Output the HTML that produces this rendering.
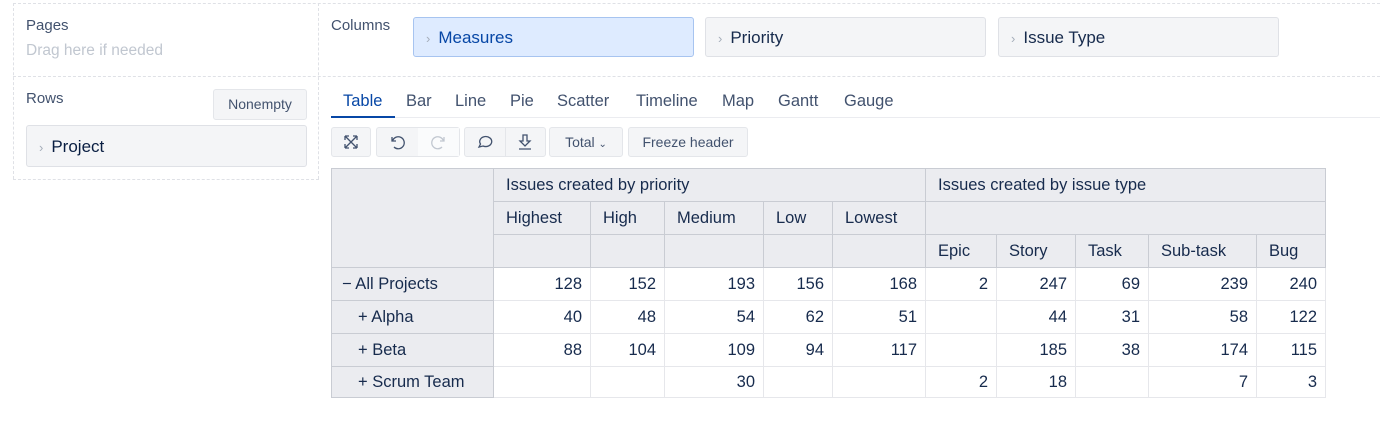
<!DOCTYPE html>
<html><head><style>
*{box-sizing:border-box;margin:0;padding:0}
body{width:1380px;height:438px;background:#fff;font-family:"Liberation Sans",sans-serif;color:#172b4d;position:relative;overflow:hidden}
.a{position:absolute}
.lbl{font-size:15px;color:#42526e}
.pill{position:absolute;height:40px;border:1px solid #dfe1e6;background:#f4f5f7;border-radius:3px;font-size:17px;line-height:40px;padding-left:12px;color:#172b4d}
.pill i{font-style:normal;color:#a5adba;font-size:13px;margin-right:8px}
.btn{position:absolute;top:127px;height:30px;background:#f4f5f7;border:1px solid #e4e6ea;border-radius:3px;font-size:14px;line-height:28px;color:#42526e;text-align:center}
.tab{position:absolute;top:92px;font-size:16.5px;color:#42526e}
table{position:absolute;left:331px;top:168px;border-collapse:collapse;font-size:16.5px;color:#172b4d}
td{border:1px solid #c9ccd3;height:33px;padding:0 8px;white-space:nowrap}
.h{background:#ebecf0;text-align:left;padding-left:12px}
.n{text-align:right;border-color:#e6e7eb}
.r{background:#ebecf0;padding-left:10px}
tr.last td{height:31px;line-height:29px}
</style></head><body>
<div class="a" style="left:13px;top:3px;width:1367px;border-top:1px dashed #dfe1e6"></div>
<div class="a" style="left:13px;top:3px;height:176px;border-left:1px dashed #dfe1e6"></div>
<div class="a" style="left:318px;top:3px;height:176px;border-left:1px dashed #dfe1e6"></div>
<div class="a" style="left:13px;top:76px;width:1367px;border-top:1px dashed #dfe1e6"></div>
<div class="a" style="left:13px;top:179px;width:306px;border-top:1px dashed #dfe1e6"></div>

<div class="a lbl" style="left:26px;top:17px">Pages</div>
<div class="a" style="left:26px;top:42px;font-size:15.5px;color:#c1c7d0">Drag here if needed</div>
<div class="a lbl" style="left:331px;top:17px">Columns</div>
<div class="pill" style="left:413px;top:17px;width:281px;background:#deebff;border-color:#a7c4f0;color:#0747a6"><i>›</i>Measures</div>
<div class="pill" style="left:705px;top:17px;width:281px"><i>›</i>Priority</div>
<div class="pill" style="left:998px;top:17px;width:281px"><i>›</i>Issue Type</div>

<div class="a lbl" style="left:26px;top:90px">Rows</div>
<div class="btn" style="left:213px;top:89px;width:94px;height:31px;line-height:29px">Nonempty</div>
<div class="pill" style="left:26px;top:125px;width:281px;height:42px;line-height:42px;color:#091e42"><i>›</i>Project</div>

<div class="tab" style="left:343px;color:#0747a6">Table</div>
<div class="tab" style="left:406px">Bar</div>
<div class="tab" style="left:455px">Line</div>
<div class="tab" style="left:510px">Pie</div>
<div class="tab" style="left:557px">Scatter</div>
<div class="tab" style="left:636px">Timeline</div>
<div class="tab" style="left:722px">Map</div>
<div class="tab" style="left:778px">Gantt</div>
<div class="tab" style="left:844px">Gauge</div>
<div class="a" style="left:331px;top:117px;width:1049px;border-top:1px solid #ebecf0"></div>
<div class="a" style="left:331px;top:116px;width:64px;height:2px;background:#0747a6"></div>

<div class="btn" style="left:331px;width:40px"><svg width="16" height="16" viewBox="0 0 16 16" style="margin-top:6px" fill="none" stroke="#42526e" stroke-width="1.3"><path d="M2 2l12 12M14 2L2 14M2 2h4M2 2v4M14 2h-4M14 2v4M2 14h4M2 14v-4M14 14h-4M14 14v-4"/></svg></div>
<div class="btn" style="left:376px;width:84px"></div>
<div class="a" style="left:418px;top:128px;width:41px;height:28px;background:#fafbfc"></div>
<svg class="a" style="left:388px;top:133px" width="18" height="18" viewBox="0 0 18 18" fill="none" stroke="#42526e" stroke-width="1.3"><path d="M4 4v4h4M4.5 8A6 6 0 1 1 6 14"/></svg>
<svg class="a" style="left:430px;top:133px" width="18" height="18" viewBox="0 0 18 18" fill="none" stroke="#c1c7d0" stroke-width="1.3"><path d="M14 4v4h-4M13.5 8A6 6 0 1 0 12 14"/></svg>
<div class="btn" style="left:464px;width:82px"></div>
<div class="a" style="left:505px;top:128px;width:1px;height:28px;background:#e4e6ea"></div>
<svg class="a" style="left:476px;top:133px" width="18" height="18" viewBox="0 0 18 18" fill="none" stroke="#42526e" stroke-width="1.3"><path d="M3 14l1.5-3A6 5 0 1 1 7 13z"/></svg>
<svg class="a" style="left:517px;top:133px" width="16" height="18" viewBox="0 0 16 18" fill="none" stroke="#42526e" stroke-width="1.3"><path d="M6 2h4v6h3l-5 5-5-5h3zM2 16h12"/></svg>
<div class="btn" style="left:549px;width:74px">Total <span style="font-size:10px">⌄</span></div>
<div class="btn" style="left:628px;width:120px">Freeze header</div>

<table>
<tr><td class="h" rowspan="3" style="width:162px"></td><td class="h" colspan="5">Issues created by priority</td><td class="h" colspan="5">Issues created by issue type</td></tr>
<tr><td class="h" style="width:97px">Highest</td><td class="h" style="width:74px">High</td><td class="h" style="width:99px">Medium</td><td class="h" style="width:69px">Low</td><td class="h" style="width:93px">Lowest</td><td class="h" colspan="5"></td></tr>
<tr><td class="h"></td><td class="h"></td><td class="h"></td><td class="h"></td><td class="h"></td><td class="h" style="width:71px">Epic</td><td class="h" style="width:79px">Story</td><td class="h" style="width:73px">Task</td><td class="h" style="width:108px">Sub-task</td><td class="h" style="width:69px">Bug</td></tr>
<tr><td class="r">− All Projects</td><td class="n">128</td><td class="n">152</td><td class="n">193</td><td class="n">156</td><td class="n">168</td><td class="n">2</td><td class="n">247</td><td class="n">69</td><td class="n">239</td><td class="n">240</td></tr>
<tr><td class="r" style="padding-left:26px">+ Alpha</td><td class="n">40</td><td class="n">48</td><td class="n">54</td><td class="n">62</td><td class="n">51</td><td class="n"></td><td class="n">44</td><td class="n">31</td><td class="n">58</td><td class="n">122</td></tr>
<tr><td class="r" style="padding-left:26px">+ Beta</td><td class="n">88</td><td class="n">104</td><td class="n">109</td><td class="n">94</td><td class="n">117</td><td class="n"></td><td class="n">185</td><td class="n">38</td><td class="n">174</td><td class="n">115</td></tr>
<tr class="last"><td class="r" style="padding-left:26px">+ Scrum Team</td><td class="n"></td><td class="n"></td><td class="n">30</td><td class="n"></td><td class="n"></td><td class="n">2</td><td class="n">18</td><td class="n"></td><td class="n">7</td><td class="n">3</td></tr>
</table>
</body></html>
